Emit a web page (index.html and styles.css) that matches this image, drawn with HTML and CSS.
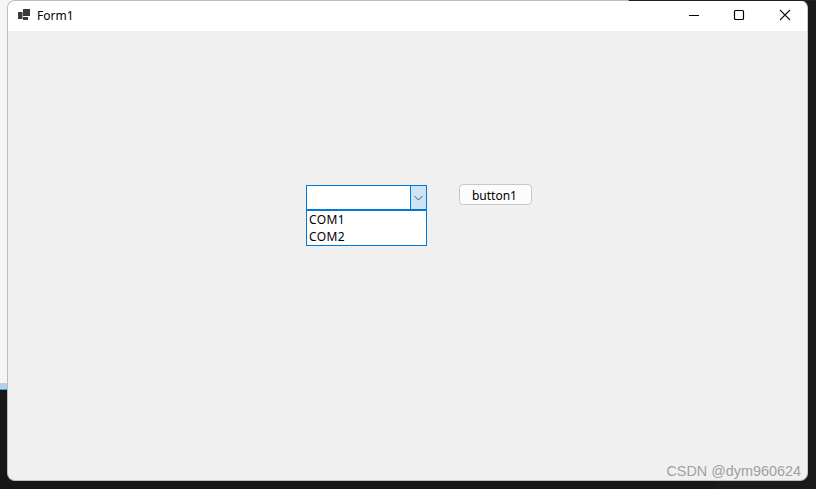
FILE: index.html
```html
<!DOCTYPE html>
<html lang="en">
<head>
<meta charset="utf-8">
<title>Form1</title>
<link rel="stylesheet" href="styles.css">
</head>
<body>
<div class="window">
  <header class="titlebar">
    <svg class="app-icon" width="13" height="11" viewBox="0 0 13 11"><path fill="#3c3c3c" d="M0 3h4.500v7H0zM5 8h5v3H5zM5 0h7v7H5z"/></svg>
    <span class="title">Form1</span>
    <div class="controls">
      <svg class="ctl" width="46" height="30" viewBox="0 0 46 30"><path d="M20 14.500h10" stroke="#000" stroke-width="1.200" fill="none"/></svg>
      <svg class="ctl" width="46" height="30" viewBox="0 0 46 30"><rect x="19.500" y="9.500" width="9" height="9" rx="1" stroke="#000" stroke-width="1.200" fill="none"/></svg>
      <svg class="ctl" width="46" height="30" viewBox="0 0 46 30"><path d="M19 9l10 10M29 9L19 19" stroke="#111" stroke-width="1.100" fill="none"/></svg>
    </div>
  </header>
  <main class="client">
    <div class="form-row">
      <div class="combo">
        <div class="combo-box">
          <div class="combo-input"></div>
          <div class="combo-arrow"><svg width="9" height="6" viewBox="0 0 9 6"><path d="M.5 1l4 4 4-4" stroke="#555" fill="none"/></svg></div>
        </div>
        <ul class="combo-list">
          <li>COM1</li>
          <li>COM2</li>
        </ul>
      </div>
      <button class="btn">button1</button>
    </div>
    <div class="watermark">CSDN @dym960624</div>
  </main>
</div>
<div class="topline"></div>
</body>
</html>
```
FILE: styles.css
```css
html, body { margin: 0; height: 100%; }
body {
  width: 816px;
  height: 489px;
  overflow: hidden;
  position: relative;
  background:
    linear-gradient(#1a1a1a, #1a1a1a) right top / 100px 100% no-repeat,
    linear-gradient(to bottom, #f6f6f6 0, #f6f6f6 383px, #b5d0ee 383px, #b5d0ee 389px, #1fb4c8 389px, #1fb4c8 390px, #161616 390px);
  font-family: "Noto Sans", "Liberation Sans", sans-serif;
}
.topline {
  position: absolute;
  left: 628px; right: 0; top: 0;
  height: 1px;
  background: #222;
  border-left: 1px solid #1fb4c8;
}
.window {
  position: absolute;
  left: 7px; top: 0;
  width: 801px; height: 481px;
  box-sizing: border-box;
  border: 1px solid #bdbdbd;
  border-right-color: #c8c8c8;
  border-radius: 8px;
  background: #f0f0f0;
  overflow: hidden;
  display: flex;
  flex-direction: column;
}
.titlebar {
  height: 30px;
  flex: none;
  background: #fff;
  display: flex;
  align-items: center;
  padding-left: 10px;
}
.app-icon { margin: 0 6px 3px 0; }
.title { font-size: 12px; color: #000; margin-bottom: 1px; }
.controls { margin-left: auto; display: flex; }
.ctl { display: block; }
.client { flex: 1; position: relative; padding: 154px 0 0 298px; }
.form-row { display: flex; align-items: flex-start; gap: 32px; }
.combo { width: 121px; }
.combo-box {
  display: flex;
  height: 26px;
  box-sizing: border-box;
  border: 1px solid #0078d7;
  border-bottom-width: 2px;
  background: #fff;
}
.combo-input { flex: 1; }
.combo-arrow {
  width: 15px;
  border-left: 1px solid #0078d7;
  background: #cce4f7;
  display: flex;
  align-items: center;
  justify-content: center;
}
.combo-list {
  list-style: none;
  margin: 0;
  padding: 0 0 0 2px;
  height: 34px;
  border: 1px solid #0078d7;
  border-top: 0;
  background: #fff;
  font-size: 12px;
  line-height: 17px;
  letter-spacing: 0.4px;
  color: #000;
}
.btn {
  width: 73px;
  height: 21px;
  margin-top: -1px;
  box-sizing: border-box;
  border: 1px solid #c8c8c8;
  border-radius: 4px;
  background: #fcfcfc;
  font: 12px "Noto Sans", "Liberation Sans", sans-serif;
  color: #000;
  padding: 1px 2px 0 0;
}
.watermark {
  position: absolute;
  right: 6px;
  bottom: -1px;
  font: 14.4px/20px "Liberation Sans", sans-serif;
  color: #a0a0a0;
}
```
